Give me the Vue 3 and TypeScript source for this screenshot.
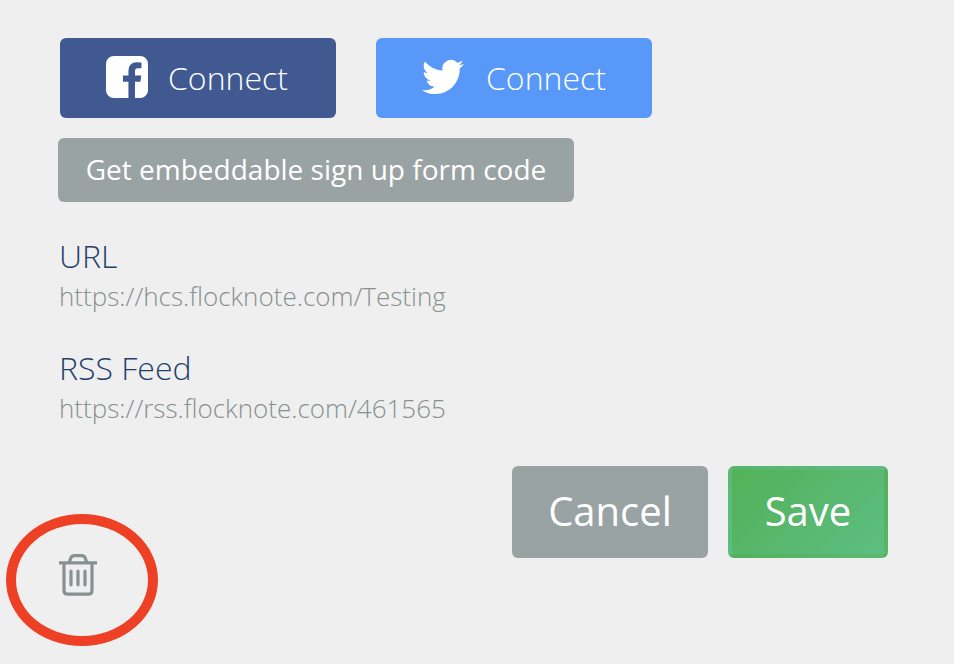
<script setup lang="ts">
interface LinkItem {
  label: string
  url: string
}

const links: LinkItem[] = [
  { label: 'URL', url: 'https://hcs.flocknote.com/Testing' },
  { label: 'RSS Feed', url: 'https://rss.flocknote.com/461565' },
]
</script>

<template>
  <main class="panel">
    <div class="social">
      <button class="connect facebook" type="button">
        <svg class="facebook-icon" viewBox="0 128 1536 1536" aria-hidden="true">
          <path d="M1248 128q119 0 203.5 84.5t84.5 203.5v960q0 119-84.5 203.5t-203.5 84.5h-188v-595h199l30-232h-229v-148q0-56 23.5-84t91.5-28l122-1v-207q-63-9-178-9-136 0-217.5 80t-81.5 226v171h-200v232h200v595h-532q-119 0-203.5-84.5t-84.5-203.5v-960q0-119 84.5-203.5t203.5-84.5h960z" />
        </svg>
        <span>Connect</span>
      </button>
      <button class="connect twitter" type="button">
        <svg class="twitter-icon" viewBox="0 0 24 24" aria-hidden="true">
          <path d="M23.953 4.57a10 10 0 01-2.825.775 4.958 4.958 0 002.163-2.723c-.951.555-2.005.959-3.127 1.184a4.92 4.92 0 00-8.384 4.482C7.69 8.095 4.067 6.13 1.64 3.162a4.822 4.822 0 00-.666 2.475c0 1.71.87 3.213 2.188 4.096a4.904 4.904 0 01-2.228-.616v.06a4.923 4.923 0 003.946 4.827 4.996 4.996 0 01-2.212.085 4.936 4.936 0 004.604 3.417 9.867 9.867 0 01-6.102 2.105c-.39 0-.779-.023-1.17-.067a13.995 13.995 0 007.557 2.209c9.053 0 13.998-7.496 13.998-13.985 0-.21 0-.42-.015-.63A9.935 9.935 0 0024 4.59z" />
        </svg>
        <span>Connect</span>
      </button>
    </div>

    <button class="embed" type="button">Get embeddable sign up form code</button>

    <dl class="links">
      <div v-for="link in links" :key="link.label" class="link">
        <dt>{{ link.label }}</dt>
        <dd>{{ link.url }}</dd>
      </div>
    </dl>

    <div class="actions">
      <button class="action cancel" type="button">Cancel</button>
      <button class="action save" type="button">Save</button>
    </div>

    <button class="trash" type="button" aria-label="Delete">
      <svg viewBox="0 0 38 42" aria-hidden="true">
        <path d="M0 8.9h38M10.2 8.5l1.5-4.3q.9-2.6 3.6-2.6h7.4q2.7 0 3.6 2.6l1.5 4.3M5 9v27.4q0 3.8 3.8 3.8h20.4q3.8 0 3.800-3.800V9" />
        <path class="slats" d="M12 17.200v13.600M19 17.200v13.600M26 17.200v13.600" />
      </svg>
      <span class="highlight"></span>
    </button>
  </main>
</template>

<style>
body {
  margin: 0;
  background: #efefef;
}
</style>

<style scoped>
.panel {
  box-sizing: border-box;
  display: flex;
  flex-direction: column;
  align-items: flex-start;
  width: 954px;
  height: 664px;
  padding: 38px 66px 0 58px;
  overflow: hidden;
  background: #efefef;
  font-family: 'Open Sans', 'Noto Sans', sans-serif;
}

button {
  box-sizing: border-box;
  margin: 0;
  padding: 0;
  border: 0;
  border-radius: 6px;
  color: #fff;
  font-family: inherit;
  white-space: nowrap;
}

.social {
  display: flex;
  gap: 40px;
  margin-left: 2px;
}

.connect {
  display: flex;
  align-items: center;
  width: 276px;
  height: 80px;
  padding: 0 0 2px 46px;
  font-size: 32px;
  font-weight: 300;
}

.connect svg {
  width: 42px;
  height: 42px;
  fill: #fff;
}

.facebook {
  background: #405991;
}

.facebook span {
  margin-left: 20px;
}

.twitter {
  background: #5798f8;
}

.twitter span {
  margin-left: 22px;
}

.embed {
  width: 516px;
  height: 64px;
  margin-top: 20px;
  padding-bottom: 2px;
  background: #9aa3a3;
  font-size: 28px;
}

.links {
  display: flex;
  flex-direction: column;
  gap: 32px;
  margin: 33px 0 0 1px;
}

.link {
  height: 80px;
}

dt {
  color: #1f426d;
  font-size: 32px;
  font-weight: 300;
  line-height: 42px;
}

dd {
  margin: 0;
  color: #879191;
  font-size: 26px;
  font-weight: 300;
  line-height: 38px;
}

.actions {
  display: flex;
  align-self: flex-end;
  gap: 20px;
  margin-top: 39px;
}

.action {
  height: 92px;
  font-size: 40px;
}

.cancel {
  width: 196px;
  padding-bottom: 4px;
  background: #9aa3a3;
}

.save {
  width: 160px;
  padding-bottom: 4px;
  border: 4px solid transparent;
  background: linear-gradient(135deg, #53b158, #5dbe82);
}

.trash {
  position: relative;
  width: 38px;
  height: 42px;
  margin: -4px 0 0 1px;
  background: none;
}

.trash svg {
  display: block;
  width: 38px;
  height: 42px;
  fill: none;
  stroke: #879191;
  stroke-width: 3.2;
}

.slats {
  stroke-linecap: round;
}

.highlight {
  position: absolute;
  top: -40px;
  left: -53px;
  box-sizing: border-box;
  width: 152px;
  height: 132px;
  border: 10px solid #ed4025;
  border-radius: 50%;
}
</style>
